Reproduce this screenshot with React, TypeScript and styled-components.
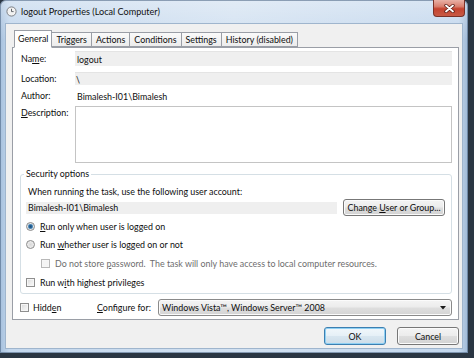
import React from 'react';
import styled, { createGlobalStyle } from 'styled-components';

const GlobalStyle = createGlobalStyle`
  html, body { margin: 0; padding: 0; }
  body {
    background: #2a3643;
    font-family: Lato, "Segoe UI", "Noto Sans", sans-serif;
    font-size: 8.9px;
    color: #0e0e0e;
  }
  #root { width: 474px; height: 358px; overflow: hidden; }
`;

const Window = styled.div`
  width: 468px;
  height: 353px;
  box-sizing: border-box;
  display: flex;
  flex-direction: column;
  border-radius: 6px 6px 0 0;
  background:
    linear-gradient(180deg, rgba(255,255,255,0.35) 0%, rgba(255,255,255,0) 40px),
    linear-gradient(90deg, #a6c0dd 0%, #c3d7ed 2%, #d2e1f1 50%, #c3d7ed 98%, #9fb9d6 100%);
  box-shadow: inset 0 0 0 1px rgba(70, 95, 125, 0.55);
`;

const TitleBar = styled.div`
  height: 23px;
  flex-shrink: 0;
  display: flex;
  align-items: center;
  gap: 4px;
  padding: 0 3px 0 6px;
`;

const TitleText = styled.span`
  color: #111;
  font-size: 9.1px;
`;

const CloseButton = styled.div`
  margin-left: auto;
  align-self: flex-start;
  width: 32px;
  height: 17px;
  box-sizing: border-box;
  border: 1px solid #7a3127;
  border-top: none;
  border-radius: 0 0 4px 4px;
  background: linear-gradient(180deg, #e9b1a6 0%, #d9806f 40%, #c5432f 55%, #c85a45 100%);
  display: flex;
  align-items: center;
  justify-content: center;
`;

const Client = styled.div`
  flex: 1;
  margin: 0 5px 4px;
  border: 1px solid #9fb5cd;
  background: #f0f0f0;
  display: flex;
  flex-direction: column;
  padding: 6px 3px 3px 6px;
`;

const TabStrip = styled.div`
  display: flex;
  align-items: flex-end;
  height: 17px;
  padding-left: 2px;
  position: relative;
  z-index: 1;
`;

const Tab = styled.div<{ $active?: boolean }>`
  box-sizing: border-box;
  height: ${p => (p.$active ? 18 : 15)}px;
  margin-bottom: ${p => (p.$active ? -1 : 0)}px;
  margin-left: -1px;
  padding: 0 ${p => (p.$active ? 3 : 4)}px ${p => (p.$active ? 2 : 0)}px;
  border: 1px solid #9a9ea6;
  border-bottom-color: ${p => (p.$active ? '#ffffff' : '#9a9ea6')};
  background: ${p => (p.$active ? '#ffffff' : 'linear-gradient(180deg, #fafafa, #ececec)')};
  display: flex;
  align-items: center;
  white-space: nowrap;
  &:first-child { margin-left: 0; }
`;

const Panel = styled.div`
  background: #ffffff;
  border: 1px solid #9a9ea6;
  padding: 3px 6px 3px 7px;
  display: flex;
  flex-direction: column;
`;

const FormRow = styled.div<{ $top: number; $h: number; $align?: string }>`
  display: flex;
  align-items: ${p => p.$align || 'center'};
  margin-top: ${p => p.$top}px;
  height: ${p => p.$h}px;
`;

const FieldLabel = styled.div<{ $pt?: number }>`
  width: 55px;
  flex-shrink: 0;
  box-sizing: border-box;
  padding-left: 1px;
  padding-top: ${p => p.$pt || 0}px;
  line-height: 12px;
`;

const ReadOnlyField = styled.div<{ $pad?: number }>`
  flex: 1;
  height: 100%;
  box-sizing: border-box;
  background: #efefef;
  border-top: 1px solid #e4e4e4;
  padding-left: ${p => p.$pad ?? 2}px;
  display: flex;
  align-items: center;
`;

const PlainValue = styled.div`
  padding-left: 2px;
`;

const TextArea = styled.div`
  flex: 1;
  height: 100%;
  box-sizing: border-box;
  background: #fff;
  border: 1px solid #c4c4c4;
`;

const GroupBox = styled.fieldset`
  margin: 5px 0 0;
  padding: 6px 6px 5px 5px;
  border: 1px solid #d5dfe5;
  border-radius: 3px;
  min-width: 0;
  display: flex;
  flex-direction: column;
`;

const Legend = styled.legend`
  padding: 0 2px;
  margin-left: -2px;
  line-height: 12px;
`;

const GroupText = styled.div`
  height: 12px;
  line-height: 12px;
  margin-left: 2px;
`;

const AccountRow = styled.div`
  display: flex;
  align-items: center;
  gap: 6px;
  margin-top: 1px;
  height: 17px;
`;

const AccountField = styled.div`
  width: 311px;
  height: 12px;
  box-sizing: border-box;
  background: #efefef;
  padding-left: 2px;
  display: flex;
  align-items: center;
`;

const Button = styled.div<{ $w: number; $default?: boolean }>`
  width: ${p => p.$w}px;
  height: 100%;
  box-sizing: border-box;
  border: 1px solid ${p => (p.$default ? '#3c7fb1' : '#777777')};
  border-radius: 3px;
  background: ${p =>
    p.$default
      ? 'linear-gradient(180deg, #f1f7fb 0%, #e6f0f7 48%, #d8e6f0 52%, #cddde9 100%)'
      : 'linear-gradient(180deg, #f4f4f4 0%, #ececec 48%, #dedede 52%, #d2d2d2 100%)'};
  box-shadow: inset 0 0 0 1px ${p => (p.$default ? '#8fd0f3' : '#fbfbfb')};
  display: flex;
  align-items: center;
  justify-content: center;
  white-space: nowrap;
`;

const OptionRow = styled.div<{ $top: number; $indent?: number; $disabled?: boolean }>`
  display: flex;
  align-items: center;
  gap: 5px;
  height: 12px;
  margin-top: ${p => p.$top}px;
  margin-left: ${p => p.$indent || 0}px;
  color: ${p => (p.$disabled ? '#6d6d6d' : 'inherit')};
`;

const RadioDot = styled.span<{ $checked?: boolean }>`
  width: 9px;
  height: 9px;
  box-sizing: border-box;
  border-radius: 50%;
  border: 1px solid #8a8a8a;
  background: ${p =>
    p.$checked
      ? 'radial-gradient(circle, #1f4f7a 0, #2c6a9e 1.6px, #8fb8d8 2.6px, #e6e6e6 3px, #f4f4f4 100%)'
      : 'radial-gradient(circle, #d8d8d8 0, #e4e4e4 2px, #f6f6f6 100%)'};
  flex-shrink: 0;
`;

const CheckBox = styled.span<{ $disabled?: boolean }>`
  width: 9px;
  height: 9px;
  box-sizing: border-box;
  border: 1px solid ${p => (p.$disabled ? '#b8b8b8' : '#8f8f8f')};
  background: ${p =>
    p.$disabled ? '#f4f4f4' : 'linear-gradient(135deg, #d8d8d8 0%, #ececec 50%, #fafafa 100%)'};
  box-shadow: inset 0 0 0 1px #f6f6f6;
  flex-shrink: 0;
`;

const BottomRow = styled.div`
  display: flex;
  align-items: center;
  margin-top: 5px;
  height: 17px;
`;

const HiddenOption = styled.div`
  width: 77px;
  flex-shrink: 0;
  display: flex;
  align-items: center;
  gap: 4px;
`;

const ConfigureLabel = styled.div`
  width: 61px;
  flex-shrink: 0;
`;

const Select = styled.div`
  flex: 1;
  height: 100%;
  box-sizing: border-box;
  border: 1px solid #8a8a8a;
  border-radius: 3px;
  background: linear-gradient(180deg, #f4f4f4 0%, #ececec 48%, #dedede 52%, #d4d4d4 100%);
  box-shadow: inset 0 0 0 1px #fbfbfb;
  display: flex;
  align-items: center;
  padding: 0 5px 0 3px;
`;

const SelectText = styled.span`
  flex: 1;
  white-space: nowrap;
`;

const DialogButtons = styled.div`
  display: flex;
  justify-content: flex-end;
  gap: 11px;
  margin-top: 7px;
  height: 18px;
`;

const ClockIcon = () => (
  <svg width="11" height="11" viewBox="0 0 11 11">
    <circle cx="5.5" cy="5.5" r="4.6" fill="#f2f2f2" stroke="#7c7f84" strokeWidth="1" />
    <path d="M5.5 2.8 V5.6 H7.6" fill="none" stroke="#555a60" strokeWidth="0.9" />
  </svg>
);

const CloseGlyph = () => (
  <svg width="11" height="9" viewBox="0 0 11 9">
    <path d="M2 1.5 L9 7.5 M9 1.5 L2 7.5" stroke="#5b1d15" strokeWidth="3.4" strokeLinecap="round" />
    <path d="M2 1.5 L9 7.5 M9 1.5 L2 7.5" stroke="#ffffff" strokeWidth="1.8" strokeLinecap="round" />
  </svg>
);

const DropArrow = () => (
  <svg width="6" height="4" viewBox="0 0 6 4">
    <path d="M0 0 H6 L3 3.5 Z" fill="#1a1a1a" />
  </svg>
);

const tabs = ['General', 'Triggers', 'Actions', 'Conditions', 'Settings', 'History (disabled)'];

export default function App() {
  return (
    <>
      <GlobalStyle />
      <Window>
        <TitleBar>
          <ClockIcon />
          <TitleText>logout Properties (Local Computer)</TitleText>
          <CloseButton>
            <CloseGlyph />
          </CloseButton>
        </TitleBar>
        <Client>
          <TabStrip>
            {tabs.map((t, i) => (
              <Tab key={t} $active={i === 0}>
                {t}
              </Tab>
            ))}
          </TabStrip>
          <Panel>
            <FormRow $top={0} $h={15}>
              <FieldLabel>
                Na<u>m</u>e:
              </FieldLabel>
              <ReadOnlyField>logout</ReadOnlyField>
            </FormRow>
            <FormRow $top={6} $h={13}>
              <FieldLabel>Location:</FieldLabel>
              <ReadOnlyField $pad={1}>\</ReadOnlyField>
            </FormRow>
            <FormRow $top={4} $h={14}>
              <FieldLabel>Author:</FieldLabel>
              <PlainValue>Bimalesh-I01\Bimalesh</PlainValue>
            </FormRow>
            <FormRow $top={3} $h={57} $align="flex-start">
              <FieldLabel $pt={1}>
                <u>D</u>escription:
              </FieldLabel>
              <TextArea />
            </FormRow>
            <GroupBox>
              <Legend>Security options</Legend>
              <GroupText>When running the task, use the following user account:</GroupText>
              <AccountRow>
                <AccountField>Bimalesh-I01\Bimalesh</AccountField>
                <Button $w={102}>
                  <span>
                    Change <u>U</u>ser or Group...
                  </span>
                </Button>
              </AccountRow>
              <OptionRow $top={4}>
                <RadioDot $checked />
                <span>
                  <u>R</u>un only when user is logged on
                </span>
              </OptionRow>
              <OptionRow $top={6}>
                <RadioDot />
                <span>
                  Run <u>w</u>hether user is logged on or not
                </span>
              </OptionRow>
              <OptionRow $top={7} $indent={15} $disabled>
                <CheckBox $disabled />
                <span>
                  Do not store <u>p</u>assword.&nbsp; The task will only have access to local computer resources.
                </span>
              </OptionRow>
              <OptionRow $top={7}>
                <CheckBox />
                <span>
                  Run w<u>i</u>th highest privileges
                </span>
              </OptionRow>
            </GroupBox>
            <BottomRow>
              <HiddenOption>
                <CheckBox />
                <span>
                  Hidd<u>e</u>n
                </span>
              </HiddenOption>
              <ConfigureLabel>
                <u>C</u>onfigure for:
              </ConfigureLabel>
              <Select>
                <SelectText>Windows Vista™, Windows Server™ 2008</SelectText>
                <DropArrow />
              </Select>
            </BottomRow>
          </Panel>
          <DialogButtons>
            <Button $w={62} $default>
              OK
            </Button>
            <Button $w={62}>Cancel</Button>
          </DialogButtons>
        </Client>
      </Window>
    </>
  );
}
